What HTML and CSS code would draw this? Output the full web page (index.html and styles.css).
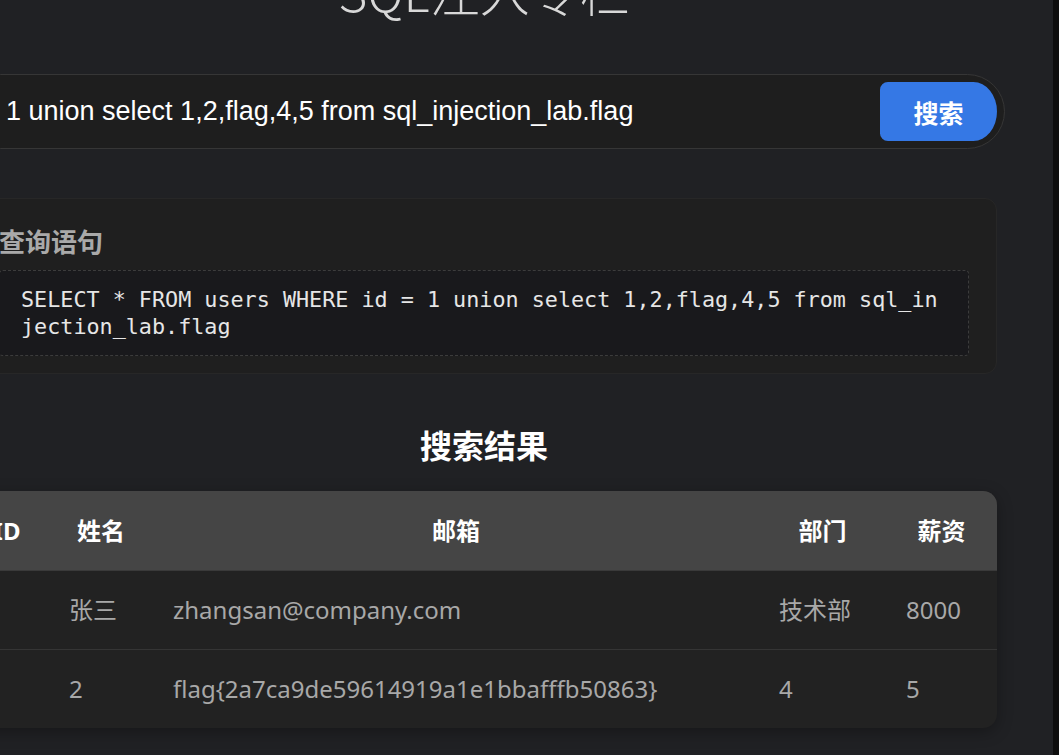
FILE: index.html
```html
<!DOCTYPE html>
<html lang="zh-CN">
<head>
    <meta charset="UTF-8">
    <meta name="viewport" content="width=device-width, initial-scale=1.0">
    <title>SQL注入专栏</title>
    <link rel="stylesheet" href="styles.css">
</head>
<body>
    <div class="page">
        <h1 class="title">SQL注入专栏</h1>

        <form class="search" onsubmit="return false;">
            <input class="search-input" type="text" value="1 union select 1,2,flag,4,5 from sql_injection_lab.flag">
            <button class="search-btn" type="submit">搜索</button>
        </form>

        <div class="query-card">
            <h3>查询语句</h3>
            <div class="query-code">SELECT * FROM users WHERE id = 1 union select 1,2,flag,4,5 from sql_injection_lab.flag</div>
        </div>

        <h2 class="result-title">搜索结果</h2>
        <table class="result-table">
            <colgroup>
                <col class="col-id">
                <col class="col-name">
                <col class="col-email">
                <col class="col-dept">
                <col class="col-salary">
            </colgroup>
            <thead>
                <tr>
                    <th>ID</th>
                    <th>姓名</th>
                    <th>邮箱</th>
                    <th>部门</th>
                    <th>薪资</th>
                </tr>
            </thead>
            <tbody>
                <tr>
                    <td>1</td>
                    <td>张三</td>
                    <td>zhangsan@company.com</td>
                    <td>技术部</td>
                    <td>8000</td>
                </tr>
                <tr>
                    <td>1</td>
                    <td>2</td>
                    <td>flag{2a7ca9de59614919a1e1bbafffb50863}</td>
                    <td>4</td>
                    <td>5</td>
                </tr>
            </tbody>
        </table>
    </div>
</body>
</html>
```

FILE: styles.css
```css
html {
    background-color: #0e0e0e;
}
body {
    margin: 0 6px 0 0;
    min-height: 100vh;
    display: flow-root;
    overflow: hidden;
    background-color: #202124;
    color: #e0e0e0;
    font-family: "Noto Sans", "Noto Sans CJK SC", sans-serif;
}
.page {
    width: 1026px;
    margin: -40px 0 0 -29px;
}
.title {
    margin: 0;
    font-size: 50px;
    line-height: 60px;
    font-weight: 300;
    text-align: center;
    color: #d8d8d8;
    font-family: "Noto Sans CJK SC", sans-serif;
}
.search {
    display: flex;
    align-items: center;
    margin: 54px -8px 0;
    padding: 7px 7px 7px 42px;
    background-color: #1e1e1e;
    border: 1px solid #363636;
    border-radius: 38px;
}
.search-input {
    flex: 1;
    min-width: 0;
    padding: 0;
    border: none;
    outline: none;
    background: transparent;
    color: #fff;
    font-family: "Liberation Sans", Arial, sans-serif;
    font-size: 27px;
}
.search-btn {
    width: 117px;
    height: 59px;
    border: none;
    background-color: #3578e5;
    color: #fff;
    font-family: "Noto Sans CJK SC", sans-serif;
    font-size: 25px;
    font-weight: 700;
    border-radius: 8px 24px 24px 8px / 8px 30px 30px 8px;
    cursor: pointer;
}
.query-card {
    margin-top: 49px;
    padding: 24px 27px 17px;
    background-color: #1f1f1f;
    border: 1px solid #272727;
    border-radius: 12px;
}
.query-card h3 {
    margin: 0 0 11px;
    font-family: "Noto Sans CJK SC", sans-serif;
    font-size: 26px;
    line-height: 36px;
    font-weight: 700;
    color: #a9a9a9;
}
.query-code {
    padding: 15px 24px 15px 21px;
    background-color: #19191c;
    border: 1px dashed #3c3c3c;
    border-radius: 4px;
    font-family: "DejaVu Sans Mono", monospace;
    font-size: 21.75px;
    line-height: 27px;
    color: #e6e6e6;
    word-break: break-all;
}
.result-title {
    margin: 48px 0 25px;
    font-family: "Noto Sans CJK SC", sans-serif;
    font-size: 32px;
    line-height: 44px;
    font-weight: 700;
    text-align: center;
    color: #fff;
}
.result-table {
    width: calc(100% + 6px);
    margin-left: -6px;
    table-layout: fixed;
    border-collapse: separate;
    border-spacing: 0;
    background-color: #222;
    border-radius: 14px;
    overflow: hidden;
    box-shadow: 0 4px 16px rgba(0, 0, 0, 0.3);
}
.col-id { width: 84px; }
.col-name { width: 104px; }
.col-dept { width: 127px; }
.col-salary { width: 111px; }
.result-table th,
.result-table td {
    padding: 20px;
    font-size: 24px;
    line-height: 38px;
    white-space: nowrap;
}
.result-table th {
    line-height: 39px;
    background-color: #454545;
    color: #fff;
    font-weight: 700;
    text-align: center;
    border-bottom: 1px solid #3a3a3a;
}
.result-table td {
    color: #a8a8a8;
    text-align: left;
}
.result-table tbody tr + tr td {
    border-top: 1px solid #353535;
}
```
